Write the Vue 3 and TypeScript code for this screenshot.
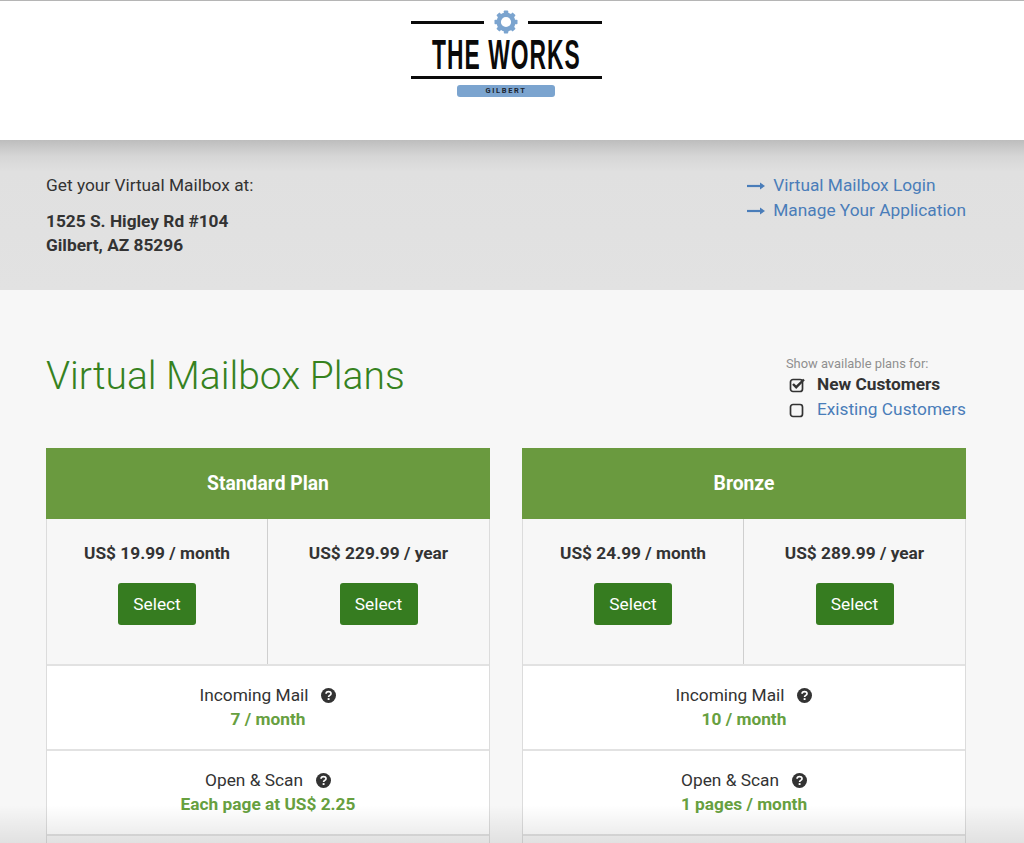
<script setup lang="ts">
interface Feature { label: string; value: string }
interface Price { text: string }
interface Plan { name: string; prices: Price[]; features: Feature[] }

const plans: Plan[] = [
  {
    name: 'Standard Plan',
    prices: [{ text: 'US$ 19.99 / month' }, { text: 'US$ 229.99 / year' }],
    features: [
      { label: 'Incoming Mail', value: '7 / month' },
      { label: 'Open & Scan', value: 'Each page at US$ 2.25' },
    ],
  },
  {
    name: 'Bronze',
    prices: [{ text: 'US$ 24.99 / month' }, { text: 'US$ 289.99 / year' }],
    features: [
      { label: 'Incoming Mail', value: '10 / month' },
      { label: 'Open & Scan', value: '1 pages / month' },
    ],
  },
]
const links = ['Virtual Mailbox Login', 'Manage Your Application']
const teeth = [0, 45, 90, 135, 180, 225, 270, 315]
</script>

<template>
  <div class="page">
    <header class="top">
      <div class="logo">
        <div class="logo-rule-row">
          <span class="rule"></span>
          <svg class="gear" viewBox="0 0 24 24" width="24" height="24">
            <circle cx="12" cy="12" r="7.300" fill="none" stroke="#7ba4cf" stroke-width="4.400" />
            <rect
              v-for="deg in teeth"
              :key="deg"
              x="9.800"
              y="0.500"
              width="4.400"
              height="5"
              rx="0.800"
              fill="#7ba4cf"
              :transform="`rotate(${deg} 12 12)`"
            />
          </svg>
          <span class="rule"></span>
        </div>
        <div class="logo-name">THE WORKS</div>
        <div class="logo-line"></div>
        <div class="logo-tag">GILBERT</div>
      </div>
    </header>

    <section class="band">
      <div class="address">
        <p class="intro">Get your Virtual Mailbox at:</p>
        <p class="street">1525 S. Higley Rd #104<br />Gilbert, AZ 85296</p>
      </div>
      <nav class="links">
        <a v-for="link in links" :key="link" class="link" href="#">
          <svg class="arrow" viewBox="0 0 18 10" width="18" height="10">
            <path d="M0 5h15" stroke="#4a7db9" stroke-width="2.200" fill="none" />
            <path d="M13 1.500 18 5l-5 3.500z" fill="#4a7db9" />
          </svg>
          <span>{{ link }}</span>
        </a>
      </nav>
    </section>

    <main class="content">
      <div class="title-row">
        <h1>Virtual Mailbox Plans</h1>
        <div class="filter">
          <div class="filter-label">Show available plans for:</div>
          <div class="option">
            <svg class="box" viewBox="0 0 16 16" width="16" height="16">
              <rect x="1.500" y="2.500" width="12" height="12" rx="2.500" fill="none" stroke="#333" stroke-width="1.700" />
              <path d="M4 7l3.200 3.200L15 2.500" fill="none" stroke="#333" stroke-width="2.400" />
            </svg>
            <strong>New Customers</strong>
          </div>
          <div class="option">
            <svg class="box" viewBox="0 0 16 16" width="16" height="16">
              <rect x="1.500" y="2.500" width="12" height="12" rx="2.500" fill="none" stroke="#333" stroke-width="1.700" />
            </svg>
            <a href="#">Existing Customers</a>
          </div>
        </div>
      </div>

      <div class="plans">
        <article v-for="plan in plans" :key="plan.name" class="plan">
          <h2>{{ plan.name }}</h2>
          <div class="prices">
            <div v-for="price in plan.prices" :key="price.text" class="price">
              <div class="amount">{{ price.text }}</div>
              <button class="select" type="button">Select</button>
            </div>
          </div>
          <div v-for="feature in plan.features" :key="feature.label" class="feature">
            <div class="feature-label">
              <span>{{ feature.label }}</span>
              <svg class="help" viewBox="0 0 16 16" width="15" height="15">
                <circle cx="8" cy="8" r="8" fill="#333" />
                <path d="M5.400 6.200c0-3.200 5.300-3.200 5.300-.2 0 1.900-2.600 1.900-2.600 3.600" fill="none" stroke="#fff" stroke-width="1.800" />
                <rect x="7.100" y="10.800" width="2" height="2" fill="#fff" />
              </svg>
            </div>
            <div class="feature-value">{{ feature.value }}</div>
          </div>
          <div class="feature feature-next"></div>
        </article>
      </div>
    </main>
    <div class="fade"></div>
  </div>
</template>

<style>
html, body { margin: 0; }
body { overflow: hidden; }
</style>

<style scoped>
.page {
  position: relative;
  height: 843px;
  overflow: hidden;
  background: #f7f7f7;
  color: #333;
  font-family: Roboto, "Liberation Sans", sans-serif;
}
.fade {
  position: absolute;
  left: 0;
  right: 0;
  bottom: 0;
  height: 38px;
  background: linear-gradient(rgba(0, 0, 0, 0), rgba(0, 0, 0, 0.09));
  pointer-events: none;
}
.top {
  height: 139px;
  background: #fff;
  border-top: 1px solid #b5b5b5;
  display: flex;
  justify-content: center;
  padding-right: 12px;
}
.logo {
  width: 191px;
  margin-top: 9px;
  display: flex;
  flex-direction: column;
  align-items: center;
}
.logo-rule-row {
  width: 100%;
  display: flex;
  align-items: center;
  gap: 10px;
  height: 24px;
}
.rule { flex: 1; height: 3px; background: #0a0a0a; }
.gear { flex: none; }
.logo-name {
  font-family: "Liberation Sans", Arial, sans-serif;
  font-weight: 700;
  font-size: 43px;
  line-height: 32px;
  letter-spacing: 2px;
  color: #0a0a0a;
  white-space: nowrap;
  transform: scaleX(0.53);
  margin-top: 4px;
}
.logo-line { width: 100%; height: 3px; background: #0a0a0a; margin-top: 6px; flex: none; }
.logo-tag {
  width: 98px;
  height: 12px;
  margin-top: 6px;
  border-radius: 3px;
  background: #7ba4cf;
  color: #1b2430;
  font-size: 7.500px;
  font-weight: 700;
  letter-spacing: 1.600px;
  line-height: 12px;
  text-align: center;
}
.band {
  height: 150px;
  box-sizing: border-box;
  padding: 33px 58px 0 46px;
  display: flex;
  justify-content: space-between;
  align-items: flex-start;
  background: linear-gradient(#bdbdbd 0, #d6d6d6 16px, #e0e0e0 32px, #e2e2e2 100%);
}
.address { font-size: 17.300px; line-height: 24px; }
.intro { margin: 0 0 12px; }
.street { margin: 0; font-weight: 700; }
.links { display: flex; flex-direction: column; }
.link {
  display: flex;
  align-items: center;
  gap: 8px;
  font-size: 17.300px;
  line-height: 25px;
  color: #4a7db9;
  text-decoration: none;
}
.content { padding: 0 58px 0 46px; }
.title-row {
  height: 158px;
  display: flex;
  justify-content: space-between;
  align-items: flex-start;
}
h1 {
  margin: 60px 0 0;
  font-size: 39px;
  line-height: 52px;
  font-weight: 300;
  color: #36821f;
}
.filter { margin-top: 65px; }
.filter-label { font-size: 12.900px; line-height: 17px; color: #8f8f8f; }
.option {
  display: flex;
  align-items: center;
  gap: 12px;
  font-size: 17.300px;
  line-height: 25px;
  margin-left: 3px;
}
.option a { color: #4a7db9; text-decoration: none; }
.box { flex: none; }
.plans {
  display: grid;
  grid-template-columns: 1fr 1fr;
  gap: 32px;
}
.plan {
  border: solid #dcdcdc;
  border-width: 0 1px;
  background: #fff;
}
h2 {
  margin: 0 -1px;
  height: 71px;
  background: #6a9a3f;
  color: #fff;
  font-size: 19.300px;
  font-weight: 700;
  line-height: 71px;
  text-align: center;
}
.prices {
  display: grid;
  grid-template-columns: 1fr 1fr;
  height: 147px;
  background: #f7f7f7;
  border-bottom: 2px solid #e2e2e2;
  box-sizing: border-box;
}
.price {
  display: flex;
  flex-direction: column;
  align-items: center;
  padding-top: 23px;
}
.price:first-child { border-right: 1px solid #cfcfcf; }
.amount { font-size: 17.300px; font-weight: 700; line-height: 23px; }
.select {
  width: 78px;
  height: 42px;
  margin-top: 18px;
  border: 0;
  border-radius: 3px;
  background: #367c20;
  color: #fff;
  font-family: inherit;
  font-size: 17.300px;
}
.feature {
  height: 85px;
  box-sizing: border-box;
  border-bottom: 2px solid #e2e2e2;
  padding-top: 17px;
  text-align: center;
  font-size: 17.300px;
  line-height: 24px;
}
.feature-label {
  display: flex;
  justify-content: center;
  align-items: center;
  gap: 13px;
  margin-left: 0;
}
.help { flex: none; }
.feature-value { color: #67a03f; font-weight: 700; line-height: 25px; }
.feature-next { background: #f7f7f7; }
</style>
